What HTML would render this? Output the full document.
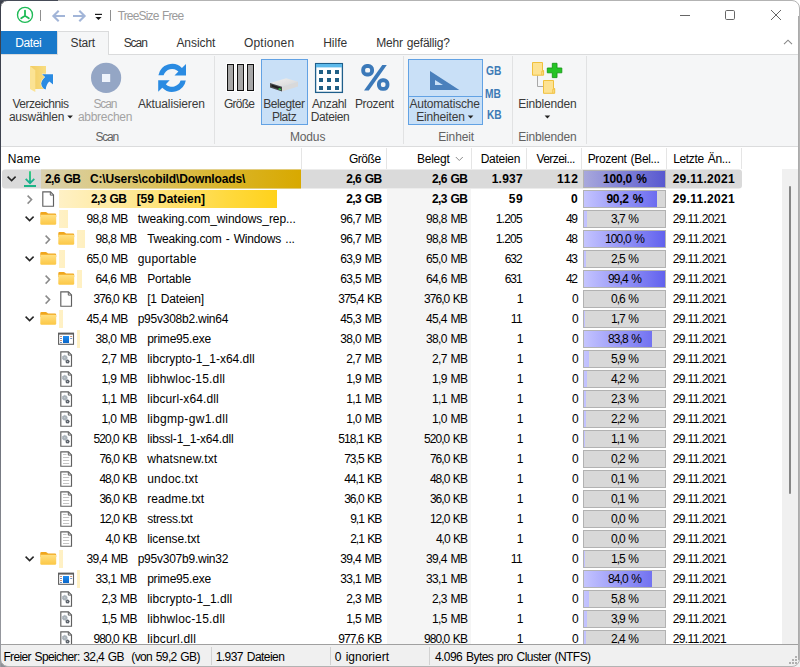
<!DOCTYPE html>
<html lang="de"><head><meta charset="utf-8"><title>TreeSize Free</title>
<style>
*{box-sizing:border-box;margin:0;padding:0}
html,body{width:800px;height:667px;overflow:hidden;background:#fff}
body{font-family:"Liberation Sans","DejaVu Sans",sans-serif;font-size:12px;color:#1a1a1a;position:relative}
.abs{position:absolute}
#win{position:absolute;left:0;top:0;width:800px;height:667px;overflow:hidden;background:#fff}
.t{position:absolute;white-space:pre;line-height:14px;height:14px}
/* tabs */
#tabline{position:absolute;left:0;top:54px;width:800px;height:1px;background:#dadbdc}
#datei{position:absolute;left:1px;top:31px;width:56px;height:23px;background:#1979ca}
#start{position:absolute;left:57px;top:31px;width:52px;height:24px;background:#f5f6f7;border:1px solid #dadbdc;border-bottom:none}
/* ribbon */
#ribbon{position:absolute;left:0;top:55px;width:800px;height:92px;background:#f5f6f7;border-bottom:1px solid #dbdcdd}
.sep{position:absolute;top:56px;width:1px;height:88px;background:#e1e2e3}
.btnsel{position:absolute;background:#c9e0f7;border:1px solid #62a2e4}
.unit{position:absolute;color:#3e7bb6;font-weight:bold;font-size:12px;line-height:12px;white-space:nowrap;transform:scaleX(0.85);transform-origin:0 0}
/* header */
#hdr{position:absolute;left:1px;top:147px;width:798px;height:22px;background:#fff}
.hs{position:absolute;top:148px;width:1px;height:21px;background:#e5e5e5}
/* rows */
#belcol{position:absolute;left:387px;top:189px;width:84px;height:456px;background:#f5f5f5}
.row{position:absolute;left:0;width:800px;height:20px}
.row.sel::before{content:"";position:absolute;left:2px;top:0;width:740px;height:19px;background:#dadada;border-radius:3px;transform:translateY(0.5px)}
.ic{position:absolute}
.gb{position:absolute;top:1px;height:18px;overflow:hidden}
.gb>div{height:18px;background:linear-gradient(90deg,#fff1c6 0%,#ffe894 30%,#ffd93d 70%,#ffce0a 100%)}
.gb.g0{top:0;height:19px;transform:translateY(0.5px);background:linear-gradient(90deg,#d9d0ad 0%,#dcc878 30%,#dab52a 70%,#d8a900 100%)}
.pb{position:absolute;left:583px;top:1px;width:83px;height:18px;border:1px solid #b2b2b2;background:#d8d8d8}
.pf{position:absolute;left:0;top:0;height:16px;overflow:hidden}
.pf>div{width:81px;height:16px;background:linear-gradient(90deg,#c4c4ff,#6262ee)}
.sel .pf>div{background:linear-gradient(90deg,#a8a8dc,#5858d0)}
/* scrollbar */
#sbar{position:absolute;left:782px;top:169px;width:17px;height:476px;background:#f0f0f0}
#thumb{position:absolute;left:789px;top:186px;width:2px;height:308px;background:#868686;border-radius:1px}
/* status */
#status{position:absolute;left:0;top:644px;width:800px;height:23px;background:#f0f0f0;border-top:1px solid #a0a0a0;z-index:5}
.ss{position:absolute;top:647px;width:1px;height:18px;background:#d2d2d2;z-index:6}
/* window frame */
#frame{position:absolute;left:0;top:0;width:800px;height:667px;border:1px solid #b3b3b3;border-radius:8px;pointer-events:none;z-index:50}
#frameL{position:absolute;left:0;top:0;width:1px;height:667px;background:linear-gradient(#3c404c 0%,#3f4450 30%,#5e626e 55%,#85888f 80%,#9a9ca2 100%);z-index:52}
#frameT{position:absolute;left:0;top:0;width:58px;height:1px;background:#464b57;z-index:52}
</style></head><body>
<div id="win">
<svg width="0" height="0" style="position:absolute"><defs>
<linearGradient id="fg" x1="0" y1="0" x2="0" y2="1"><stop offset="0" stop-color="#ffe082"/><stop offset="1" stop-color="#fcc744"/></linearGradient>
<linearGradient id="bg" x1="0" y1="0" x2="0" y2="1"><stop offset="0" stop-color="#1e8cf0"/><stop offset="1" stop-color="#0a66c8"/></linearGradient>
<linearGradient id="dg" x1="0" y1="2" x2="0" y2="15" gradientUnits="userSpaceOnUse"><stop offset="0" stop-color="#20cc74"/><stop offset="1" stop-color="#1aa892"/></linearGradient>
</defs></svg>
<!-- title bar -->
<svg class="abs" style="left:15px;top:5px" width="20" height="20" viewBox="15 5 20 20"><circle cx="25" cy="14.9" r="7.5" fill="none" stroke="#1dba55" stroke-width="1.35"/><path d="M25 10.6V15.8L21.2 18.2M25 15.8L28.8 18.2" fill="none" stroke="#1dba55" stroke-width="1.8" stroke-linecap="round"/></svg>
<div class="abs" style="left:40px;top:9.5px;width:1px;height:11px;background:#8f8f8f"></div>
<svg class="abs" style="left:50px;top:8px" width="18" height="16" viewBox="50 8 18 16"><path d="M65 16H53.8M58.7 10.8L53.4 16L58.7 21.2" fill="none" stroke="#a2b5d8" stroke-width="2.1"/></svg>
<svg class="abs" style="left:71px;top:8px" width="18" height="16" viewBox="71 8 18 16"><path d="M73 16H84.2M79.3 10.8L84.6 16L79.3 21.2" fill="none" stroke="#a2b5d8" stroke-width="2.1"/></svg>
<svg class="abs" style="left:93px;top:12px" width="12" height="10" viewBox="93 12 12 10"><path d="M95 14.4H102" stroke="#1a1a1a" stroke-width="1.2"/><path d="M95.4 16.9H101.6L98.5 20Z" fill="#1a1a1a"/></svg>
<div class="abs" style="left:110px;top:9.5px;width:1px;height:11px;background:#8f8f8f"></div>
<svg class="abs" style="left:679px;top:9px" width="12" height="12" viewBox="0 0 12 12"><path d="M1 6.5H11" stroke="#666" stroke-width="1"/></svg>
<svg class="abs" style="left:724px;top:9px" width="12" height="12" viewBox="0 0 12 12"><rect x="1.5" y="1.5" width="9" height="9" rx="1.2" fill="none" stroke="#666" stroke-width="1"/></svg>
<svg class="abs" style="left:770px;top:9px" width="12" height="12" viewBox="0 0 12 12"><path d="M1 1L11 11M11 1L1 11" stroke="#666" stroke-width="1"/></svg>
<svg class="abs" style="left:783px;top:39px" width="10" height="6" viewBox="0 0 10 6"><path d="M1 5.2L5 1.2L9 5.2" fill="none" stroke="#888" stroke-width="1.1"/></svg>
<!-- tabs -->
<div id="tabline"></div>
<div id="datei"></div>
<div id="start"></div>
<!-- ribbon -->
<div id="ribbon"></div>
<div class="sep" style="left:214px"></div>
<div class="sep" style="left:403px"></div>
<div class="sep" style="left:512px"></div>
<div class="sep" style="left:586px"></div>
<div class="btnsel" style="left:261px;top:59px;width:47px;height:66px"></div>
<div class="btnsel" style="left:408px;top:59px;width:75px;height:66px"></div>
<div class="abs" style="left:408px;top:96px;width:75px;height:1px;background:#62a2e4"></div>
<svg class="abs" style="left:0;top:55px" width="800" height="92" viewBox="0 55 800 92">
<defs>
<linearGradient id="f1" x1="0" y1="0" x2="1" y2="0"><stop offset="0" stop-color="#f2cc62"/><stop offset="1" stop-color="#f8dd82"/></linearGradient>
<linearGradient id="hd1" x1="0" y1="0" x2="1" y2="1"><stop offset="0" stop-color="#f0f0f0"/><stop offset="1" stop-color="#d6d6d6"/></linearGradient>
</defs>
<!-- open folder with arrow -->
<path d="M30 66 H46 V89 H35 Z" fill="url(#f1)"/>
<path d="M30 66 L35.3 70.2 V92 L30 89 Z" fill="#fbe394"/>
<path d="M42 74.2 H53 V84.6 L49.4 81.6 C47.2 83.6 46.2 86 45.7 89.6 C43 88.6 41.4 86.5 41.2 83.5 C41.6 80.7 43 78.7 45.1 76.9 Z" fill="#2a8be2" stroke="#fff" stroke-width="0.8" paint-order="stroke"/>
<!-- stop -->
<circle cx="106.1" cy="77.8" r="15.1" fill="#94a6c5"/>
<rect x="102" y="74" width="8.2" height="8" fill="#eef3fb"/>
<!-- refresh -->
<g fill="#2a8be2"><path id="ra" d="M158.4 75.3 A13.9 13.9 0 0 1 181.93 68.07 L186 64 L186 75.5 L174.5 75.5 L178.4 71.6 A8.9 8.9 0 0 0 163.6 75.3 Z"/><path d="M158.4 75.3 A13.9 13.9 0 0 1 181.93 68.07 L186 64 L186 75.5 L174.5 75.5 L178.4 71.6 A8.9 8.9 0 0 0 163.6 75.3 Z" transform="rotate(180 172.1 77.9)"/></g>
<!-- Groesse bars -->
<g fill="#a7a7a7" stroke="#111" stroke-width="1"><rect x="226" y="63" width="9" height="29" fill="#fff" stroke="none"/><rect x="236" y="63" width="9" height="29" fill="#fff" stroke="none"/><rect x="246" y="63" width="9" height="29" fill="#fff" stroke="none"/><rect x="227.5" y="64.5" width="6" height="26"/><rect x="237.5" y="64.5" width="6" height="26"/><rect x="247.5" y="64.5" width="6" height="26"/></g>
<!-- HDD -->
<path d="M270 82.9 L286.2 78.3 L298 81.8 L282 86.8 Z" fill="url(#hd1)"/>
<path d="M282 86.8 L298 81.8 V86.5 L282 91.5 Z" fill="#d9d9d9"/>
<path d="M270 82.9 L282 86.8 V91.5 L270 87.6 Z" fill="#4a4a4a"/>
<path d="M271.5 84.6 L281 87.8 V89.8 L271.5 86.6 Z" fill="#1e1e1e"/>
<path d="M278.6 88 L281 88.8 V90.2 L278.6 89.4 Z" fill="#35d04a"/>
<!-- Anzahl Dateien -->
<rect x="315.6" y="63.6" width="26.8" height="28.8" fill="#fff" stroke="#1f5f8b" stroke-width="1.3"/>
<rect x="316" y="64" width="26" height="3.4" fill="#5db9ea"/>
<g fill="#1f5f85"><rect x="319" y="70" width="4" height="4"/><rect x="327" y="70" width="4" height="4"/><rect x="335" y="70" width="4" height="4"/><rect x="319" y="78" width="4" height="4"/><rect x="327" y="78" width="4" height="4"/><rect x="335" y="78" width="4" height="4"/><rect x="319" y="86" width="4" height="4"/><rect x="327" y="86" width="4" height="4"/><rect x="335" y="86" width="4" height="4"/></g>
<!-- Percent -->
<g fill="none" stroke="#3b79b9" stroke-width="3.9"><rect x="363.2" y="65.95" width="8.85" height="8.6" rx="3.6"/><rect x="378.95" y="80.25" width="8.5" height="8.6" rx="3.6"/></g>
<path d="M382.3 64.9 H386.8 L368.8 90.6 H364 Z" fill="#3b79b9"/>
<!-- triangle -->
<path d="M430 71 V90 H459.3 Z M435 80 L443 84.9 H435 Z" fill="#4a80bc" fill-rule="evenodd"/>
<!-- Einblenden -->
<path d="M537.5 75.5 V86.5 H543" fill="none" stroke="#a8a8a8" stroke-width="1"/>
<path d="M532.5 62.5 H542.5 V70.5 H543.6 V75.2 H532.5 Z" fill="#fde292" stroke="#f0c03c" stroke-width="1"/>
<path d="M541.8 75 V71.2 H543.4" fill="none" stroke="#f0c03c" stroke-width="0.9"/>
<path d="M543.5 80.5 H553.5 V88.5 H554.7 V93.3 H543.5 Z" fill="#fde292" stroke="#f0c03c" stroke-width="1"/>
<path d="M552.8 93 V89.2 H554.4" fill="none" stroke="#f0c03c" stroke-width="0.9"/>
<path d="M552.3 63.3 H557 V68 H561.8 V72.8 H557 V77.6 H552.3 V72.8 H547.3 V68 H552.3 Z" fill="#25c425" stroke="#179a17" stroke-width="0.9"/>
<!-- dropdown arrows -->
<path d="M67.3 115.4 H72.9 L70.1 118.4 Z" fill="#222"/>
<path d="M467.8 115.4 H473.4 L470.6 118.4 Z" fill="#222"/>
<path d="M544.6 115.4 H550.2 L547.4 118.4 Z" fill="#222"/>
</svg>
<div class="unit" style="left:486.1px;top:65.3px">GB</div>
<div class="unit" style="left:485.2px;top:87.5px">MB</div>
<div class="unit" style="left:486.6px;top:109.4px">KB</div>
<!-- header -->
<div id="hdr"></div>
<div class="hs" style="left:301px"></div><div class="hs" style="left:386px"></div><div class="hs" style="left:471px"></div><div class="hs" style="left:526px"></div><div class="hs" style="left:581px"></div><div class="hs" style="left:666px"></div><div class="hs" style="left:741px"></div>
<svg class="abs" style="left:455px;top:156px" width="9" height="6" viewBox="0 0 9 6"><path d="M0.8 1L4.3 4.5L7.8 1" fill="none" stroke="#8a8a8a" stroke-width="1"/></svg>
<!-- rows -->
<div id="belcol"></div>
<div class="row sel" style="top:169px"><svg class="ic" style="left:5px;top:0" width="14" height="20" viewBox="0 0 14 20"><path d="M2.6 7.6 L6.6 11.6 L10.6 7.6" fill="none" stroke="#262626" stroke-width="1.5"/></svg><svg class="ic" style="left:22px;top:0" width="18" height="20" viewBox="0 0 18 20"><path d="M8 2.3 V14 M3.7 9.9 L8 14.2 L12.3 9.9" fill="none" stroke="url(#dg)" stroke-width="1.8"/><path d="M2 17 H14" stroke="#1db487" stroke-width="2"/></svg><div class="gb g0" style="left:41px;width:260px"></div><div class="pb"><div class="pf" style="width:81px"><div></div></div></div></div>
<div class="row" style="top:189px"><svg class="ic" style="left:23px;top:0" width="14" height="20" viewBox="0 0 14 20"><path d="M4.6 6.6 L8.6 10.6 L4.6 14.6" fill="none" stroke="#8a8a8a" stroke-width="1.5"/></svg><svg class="ic" style="left:40px;top:0" width="18" height="20" viewBox="0 0 18 20"><path d="M2.8 2.9 H10.5 L13.5 5.9 V17.2 H2.8 Z" fill="#fff" stroke="#606060" stroke-width="1.15" stroke-linejoin="miter"/><path d="M10.3 3.1 V6.1 H13.3" fill="none" stroke="#606060" stroke-width="1" stroke-linejoin="round"/></svg><div class="gb" style="left:59px;width:218px"><div style="width:242px"></div></div><div class="pb"><div class="pf" style="width:73px"><div></div></div></div></div>
<div class="row" style="top:209px"><svg class="ic" style="left:23px;top:0" width="14" height="20" viewBox="0 0 14 20"><path d="M2.6 7.6 L6.6 11.6 L10.6 7.6" fill="none" stroke="#262626" stroke-width="1.5"/></svg><svg class="ic" style="left:40px;top:0" width="18" height="20" viewBox="0 0 18 20"><path d="M0.3 4.2 Q0.3 3 1.5 3 H5.6 Q6.3 3 6.9 3.5 L8 4.6 H15 Q16.2 4.6 16.2 5.8 V8 H0.3 Z" fill="#f0a61c"/><path d="M0.3 6.7 Q0.3 5.7 1.3 5.7 H15.2 Q16.2 5.7 16.2 6.7 V14.6 Q16.2 15.8 15 15.8 H1.5 Q0.3 15.8 0.3 14.6 Z" fill="url(#fg)"/></svg><div class="gb" style="left:59px;width:9px"><div style="width:242px"></div></div><div class="pb"><div class="pf" style="width:3px"><div></div></div></div></div>
<div class="row" style="top:229px"><svg class="ic" style="left:41px;top:0" width="14" height="20" viewBox="0 0 14 20"><path d="M4.6 6.6 L8.6 10.6 L4.6 14.6" fill="none" stroke="#8a8a8a" stroke-width="1.5"/></svg><svg class="ic" style="left:58px;top:0" width="18" height="20" viewBox="0 0 18 20"><path d="M0.3 4.2 Q0.3 3 1.5 3 H5.6 Q6.3 3 6.9 3.5 L8 4.6 H15 Q16.2 4.6 16.2 5.8 V8 H0.3 Z" fill="#f0a61c"/><path d="M0.3 6.7 Q0.3 5.7 1.3 5.7 H15.2 Q16.2 5.7 16.2 6.7 V14.6 Q16.2 15.8 15 15.8 H1.5 Q0.3 15.8 0.3 14.6 Z" fill="url(#fg)"/></svg><div class="gb" style="left:77px;width:8px"><div style="width:224px"></div></div><div class="pb"><div class="pf" style="width:81px"><div></div></div></div></div>
<div class="row" style="top:249px"><svg class="ic" style="left:23px;top:0" width="14" height="20" viewBox="0 0 14 20"><path d="M2.6 7.6 L6.6 11.6 L10.6 7.6" fill="none" stroke="#262626" stroke-width="1.5"/></svg><svg class="ic" style="left:40px;top:0" width="18" height="20" viewBox="0 0 18 20"><path d="M0.3 4.2 Q0.3 3 1.5 3 H5.6 Q6.3 3 6.9 3.5 L8 4.6 H15 Q16.2 4.6 16.2 5.8 V8 H0.3 Z" fill="#f0a61c"/><path d="M0.3 6.7 Q0.3 5.7 1.3 5.7 H15.2 Q16.2 5.7 16.2 6.7 V14.6 Q16.2 15.8 15 15.8 H1.5 Q0.3 15.8 0.3 14.6 Z" fill="url(#fg)"/></svg><div class="gb" style="left:59px;width:6px"><div style="width:242px"></div></div><div class="pb"><div class="pf" style="width:2px"><div></div></div></div></div>
<div class="row" style="top:269px"><svg class="ic" style="left:41px;top:0" width="14" height="20" viewBox="0 0 14 20"><path d="M4.6 6.6 L8.6 10.6 L4.6 14.6" fill="none" stroke="#8a8a8a" stroke-width="1.5"/></svg><svg class="ic" style="left:58px;top:0" width="18" height="20" viewBox="0 0 18 20"><path d="M0.3 4.2 Q0.3 3 1.5 3 H5.6 Q6.3 3 6.9 3.5 L8 4.6 H15 Q16.2 4.6 16.2 5.8 V8 H0.3 Z" fill="#f0a61c"/><path d="M0.3 6.7 Q0.3 5.7 1.3 5.7 H15.2 Q16.2 5.7 16.2 6.7 V14.6 Q16.2 15.8 15 15.8 H1.5 Q0.3 15.8 0.3 14.6 Z" fill="url(#fg)"/></svg><div class="gb" style="left:77px;width:5px"><div style="width:224px"></div></div><div class="pb"><div class="pf" style="width:81px"><div></div></div></div></div>
<div class="row" style="top:289px"><svg class="ic" style="left:41px;top:0" width="14" height="20" viewBox="0 0 14 20"><path d="M4.6 6.6 L8.6 10.6 L4.6 14.6" fill="none" stroke="#8a8a8a" stroke-width="1.5"/></svg><svg class="ic" style="left:58px;top:0" width="18" height="20" viewBox="0 0 18 20"><path d="M2.8 2.9 H10.5 L13.5 5.9 V17.2 H2.8 Z" fill="#fff" stroke="#606060" stroke-width="1.15" stroke-linejoin="miter"/><path d="M10.3 3.1 V6.1 H13.3" fill="none" stroke="#606060" stroke-width="1" stroke-linejoin="round"/></svg><div class="pb"><div class="pf" style="width:0px"><div></div></div></div></div>
<div class="row" style="top:309px"><svg class="ic" style="left:23px;top:0" width="14" height="20" viewBox="0 0 14 20"><path d="M2.6 7.6 L6.6 11.6 L10.6 7.6" fill="none" stroke="#262626" stroke-width="1.5"/></svg><svg class="ic" style="left:40px;top:0" width="18" height="20" viewBox="0 0 18 20"><path d="M0.3 4.2 Q0.3 3 1.5 3 H5.6 Q6.3 3 6.9 3.5 L8 4.6 H15 Q16.2 4.6 16.2 5.8 V8 H0.3 Z" fill="#f0a61c"/><path d="M0.3 6.7 Q0.3 5.7 1.3 5.7 H15.2 Q16.2 5.7 16.2 6.7 V14.6 Q16.2 15.8 15 15.8 H1.5 Q0.3 15.8 0.3 14.6 Z" fill="url(#fg)"/></svg><div class="gb" style="left:59px;width:4px"><div style="width:242px"></div></div><div class="pb"><div class="pf" style="width:1px"><div></div></div></div></div>
<div class="row" style="top:329px"><svg class="ic" style="left:58px;top:0" width="18" height="20" viewBox="0 0 18 20"><rect x="0.6" y="4.3" width="14.9" height="11" fill="#fff" stroke="#5e5e5e" stroke-width="1.1"/><rect x="0.1" y="3.8" width="15.9" height="1.8" fill="#5e5e5e"/><rect x="5" y="7" width="6" height="7" fill="url(#bg)"/><path d="M2 7.5H4M2 11.5H4M12.2 7.5H14.2" stroke="#c9937c" stroke-width="1"/><path d="M2 9.5H4M2 13.5H4M12.2 9.5H14.2" stroke="#7090c0" stroke-width="1"/></svg><div class="gb" style="left:77px;width:3px"><div style="width:224px"></div></div><div class="pb"><div class="pf" style="width:68px"><div></div></div></div></div>
<div class="row" style="top:349px"><svg class="ic" style="left:58px;top:0" width="18" height="20" viewBox="0 0 18 20"><path d="M2.8 2.9 H10.5 L13.5 5.9 V17.2 H2.8 Z" fill="#fff" stroke="#606060" stroke-width="1.15" stroke-linejoin="miter"/><path d="M10.3 3.1 V6.1 H13.3" fill="none" stroke="#606060" stroke-width="1" stroke-linejoin="round"/><circle cx="6.75" cy="8.7" r="1.6" fill="#c9d3d0" stroke="#aab2ba" stroke-width="1.9"/><circle cx="6.75" cy="8.7" r="2.4" fill="none" stroke="#aab2ba" stroke-width="0.9" stroke-dasharray="0.9 0.98"/><circle cx="9.55" cy="12.5" r="1.15" fill="#fff" stroke="#5c636b" stroke-width="1.4"/><circle cx="9.55" cy="12.5" r="1.9" fill="none" stroke="#5c636b" stroke-width="0.7" stroke-dasharray="0.7 0.79"/></svg><div class="pb"><div class="pf" style="width:5px"><div></div></div></div></div>
<div class="row" style="top:369px"><svg class="ic" style="left:58px;top:0" width="18" height="20" viewBox="0 0 18 20"><path d="M2.8 2.9 H10.5 L13.5 5.9 V17.2 H2.8 Z" fill="#fff" stroke="#606060" stroke-width="1.15" stroke-linejoin="miter"/><path d="M10.3 3.1 V6.1 H13.3" fill="none" stroke="#606060" stroke-width="1" stroke-linejoin="round"/><circle cx="6.75" cy="8.7" r="1.6" fill="#c9d3d0" stroke="#aab2ba" stroke-width="1.9"/><circle cx="6.75" cy="8.7" r="2.4" fill="none" stroke="#aab2ba" stroke-width="0.9" stroke-dasharray="0.9 0.98"/><circle cx="9.55" cy="12.5" r="1.15" fill="#fff" stroke="#5c636b" stroke-width="1.4"/><circle cx="9.55" cy="12.5" r="1.9" fill="none" stroke="#5c636b" stroke-width="0.7" stroke-dasharray="0.7 0.79"/></svg><div class="pb"><div class="pf" style="width:3px"><div></div></div></div></div>
<div class="row" style="top:389px"><svg class="ic" style="left:58px;top:0" width="18" height="20" viewBox="0 0 18 20"><path d="M2.8 2.9 H10.5 L13.5 5.9 V17.2 H2.8 Z" fill="#fff" stroke="#606060" stroke-width="1.15" stroke-linejoin="miter"/><path d="M10.3 3.1 V6.1 H13.3" fill="none" stroke="#606060" stroke-width="1" stroke-linejoin="round"/><circle cx="6.75" cy="8.7" r="1.6" fill="#c9d3d0" stroke="#aab2ba" stroke-width="1.9"/><circle cx="6.75" cy="8.7" r="2.4" fill="none" stroke="#aab2ba" stroke-width="0.9" stroke-dasharray="0.9 0.98"/><circle cx="9.55" cy="12.5" r="1.15" fill="#fff" stroke="#5c636b" stroke-width="1.4"/><circle cx="9.55" cy="12.5" r="1.9" fill="none" stroke="#5c636b" stroke-width="0.7" stroke-dasharray="0.7 0.79"/></svg><div class="pb"><div class="pf" style="width:2px"><div></div></div></div></div>
<div class="row" style="top:409px"><svg class="ic" style="left:58px;top:0" width="18" height="20" viewBox="0 0 18 20"><path d="M2.8 2.9 H10.5 L13.5 5.9 V17.2 H2.8 Z" fill="#fff" stroke="#606060" stroke-width="1.15" stroke-linejoin="miter"/><path d="M10.3 3.1 V6.1 H13.3" fill="none" stroke="#606060" stroke-width="1" stroke-linejoin="round"/><circle cx="6.75" cy="8.7" r="1.6" fill="#c9d3d0" stroke="#aab2ba" stroke-width="1.9"/><circle cx="6.75" cy="8.7" r="2.4" fill="none" stroke="#aab2ba" stroke-width="0.9" stroke-dasharray="0.9 0.98"/><circle cx="9.55" cy="12.5" r="1.15" fill="#fff" stroke="#5c636b" stroke-width="1.4"/><circle cx="9.55" cy="12.5" r="1.9" fill="none" stroke="#5c636b" stroke-width="0.7" stroke-dasharray="0.7 0.79"/></svg><div class="pb"><div class="pf" style="width:2px"><div></div></div></div></div>
<div class="row" style="top:429px"><svg class="ic" style="left:58px;top:0" width="18" height="20" viewBox="0 0 18 20"><path d="M2.8 2.9 H10.5 L13.5 5.9 V17.2 H2.8 Z" fill="#fff" stroke="#606060" stroke-width="1.15" stroke-linejoin="miter"/><path d="M10.3 3.1 V6.1 H13.3" fill="none" stroke="#606060" stroke-width="1" stroke-linejoin="round"/><circle cx="6.75" cy="8.7" r="1.6" fill="#c9d3d0" stroke="#aab2ba" stroke-width="1.9"/><circle cx="6.75" cy="8.7" r="2.4" fill="none" stroke="#aab2ba" stroke-width="0.9" stroke-dasharray="0.9 0.98"/><circle cx="9.55" cy="12.5" r="1.15" fill="#fff" stroke="#5c636b" stroke-width="1.4"/><circle cx="9.55" cy="12.5" r="1.9" fill="none" stroke="#5c636b" stroke-width="0.7" stroke-dasharray="0.7 0.79"/></svg><div class="pb"><div class="pf" style="width:1px"><div></div></div></div></div>
<div class="row" style="top:449px"><svg class="ic" style="left:58px;top:0" width="18" height="20" viewBox="0 0 18 20"><path d="M2.8 2.9 H10.5 L13.5 5.9 V17.2 H2.8 Z" fill="#fff" stroke="#606060" stroke-width="1.15" stroke-linejoin="miter"/><path d="M10.3 3.1 V6.1 H13.3" fill="none" stroke="#606060" stroke-width="1" stroke-linejoin="round"/><path d="M5 8.5H9.5M5 8.5H11.2M5 11.5H11.2M5 14.5H11.2M5 5.5H8.5" stroke="#c4c4c4" stroke-width="1"/></svg><div class="pb"><div class="pf" style="width:0px"><div></div></div></div></div>
<div class="row" style="top:469px"><svg class="ic" style="left:58px;top:0" width="18" height="20" viewBox="0 0 18 20"><path d="M2.8 2.9 H10.5 L13.5 5.9 V17.2 H2.8 Z" fill="#fff" stroke="#606060" stroke-width="1.15" stroke-linejoin="miter"/><path d="M10.3 3.1 V6.1 H13.3" fill="none" stroke="#606060" stroke-width="1" stroke-linejoin="round"/><path d="M5 8.5H9.5M5 8.5H11.2M5 11.5H11.2M5 14.5H11.2M5 5.5H8.5" stroke="#c4c4c4" stroke-width="1"/></svg><div class="pb"><div class="pf" style="width:0px"><div></div></div></div></div>
<div class="row" style="top:489px"><svg class="ic" style="left:58px;top:0" width="18" height="20" viewBox="0 0 18 20"><path d="M2.8 2.9 H10.5 L13.5 5.9 V17.2 H2.8 Z" fill="#fff" stroke="#606060" stroke-width="1.15" stroke-linejoin="miter"/><path d="M10.3 3.1 V6.1 H13.3" fill="none" stroke="#606060" stroke-width="1" stroke-linejoin="round"/><path d="M5 8.5H9.5M5 8.5H11.2M5 11.5H11.2M5 14.5H11.2M5 5.5H8.5" stroke="#c4c4c4" stroke-width="1"/></svg><div class="pb"><div class="pf" style="width:0px"><div></div></div></div></div>
<div class="row" style="top:509px"><svg class="ic" style="left:58px;top:0" width="18" height="20" viewBox="0 0 18 20"><path d="M2.8 2.9 H10.5 L13.5 5.9 V17.2 H2.8 Z" fill="#fff" stroke="#606060" stroke-width="1.15" stroke-linejoin="miter"/><path d="M10.3 3.1 V6.1 H13.3" fill="none" stroke="#606060" stroke-width="1" stroke-linejoin="round"/><path d="M5 8.5H9.5M5 8.5H11.2M5 11.5H11.2M5 14.5H11.2M5 5.5H8.5" stroke="#c4c4c4" stroke-width="1"/></svg><div class="pb"><div class="pf" style="width:0px"><div></div></div></div></div>
<div class="row" style="top:529px"><svg class="ic" style="left:58px;top:0" width="18" height="20" viewBox="0 0 18 20"><path d="M2.8 2.9 H10.5 L13.5 5.9 V17.2 H2.8 Z" fill="#fff" stroke="#606060" stroke-width="1.15" stroke-linejoin="miter"/><path d="M10.3 3.1 V6.1 H13.3" fill="none" stroke="#606060" stroke-width="1" stroke-linejoin="round"/><path d="M5 8.5H9.5M5 8.5H11.2M5 11.5H11.2M5 14.5H11.2M5 5.5H8.5" stroke="#c4c4c4" stroke-width="1"/></svg><div class="pb"><div class="pf" style="width:0px"><div></div></div></div></div>
<div class="row" style="top:549px"><svg class="ic" style="left:23px;top:0" width="14" height="20" viewBox="0 0 14 20"><path d="M2.6 7.6 L6.6 11.6 L10.6 7.6" fill="none" stroke="#262626" stroke-width="1.5"/></svg><svg class="ic" style="left:40px;top:0" width="18" height="20" viewBox="0 0 18 20"><path d="M0.3 4.2 Q0.3 3 1.5 3 H5.6 Q6.3 3 6.9 3.5 L8 4.6 H15 Q16.2 4.6 16.2 5.8 V8 H0.3 Z" fill="#f0a61c"/><path d="M0.3 6.7 Q0.3 5.7 1.3 5.7 H15.2 Q16.2 5.7 16.2 6.7 V14.6 Q16.2 15.8 15 15.8 H1.5 Q0.3 15.8 0.3 14.6 Z" fill="url(#fg)"/></svg><div class="gb" style="left:59px;width:4px"><div style="width:242px"></div></div><div class="pb"><div class="pf" style="width:1px"><div></div></div></div></div>
<div class="row" style="top:569px"><svg class="ic" style="left:58px;top:0" width="18" height="20" viewBox="0 0 18 20"><rect x="0.6" y="4.3" width="14.9" height="11" fill="#fff" stroke="#5e5e5e" stroke-width="1.1"/><rect x="0.1" y="3.8" width="15.9" height="1.8" fill="#5e5e5e"/><rect x="5" y="7" width="6" height="7" fill="url(#bg)"/><path d="M2 7.5H4M2 11.5H4M12.2 7.5H14.2" stroke="#c9937c" stroke-width="1"/><path d="M2 9.5H4M2 13.5H4M12.2 9.5H14.2" stroke="#7090c0" stroke-width="1"/></svg><div class="gb" style="left:77px;width:3px"><div style="width:224px"></div></div><div class="pb"><div class="pf" style="width:68px"><div></div></div></div></div>
<div class="row" style="top:589px"><svg class="ic" style="left:58px;top:0" width="18" height="20" viewBox="0 0 18 20"><path d="M2.8 2.9 H10.5 L13.5 5.9 V17.2 H2.8 Z" fill="#fff" stroke="#606060" stroke-width="1.15" stroke-linejoin="miter"/><path d="M10.3 3.1 V6.1 H13.3" fill="none" stroke="#606060" stroke-width="1" stroke-linejoin="round"/><circle cx="6.75" cy="8.7" r="1.6" fill="#c9d3d0" stroke="#aab2ba" stroke-width="1.9"/><circle cx="6.75" cy="8.7" r="2.4" fill="none" stroke="#aab2ba" stroke-width="0.9" stroke-dasharray="0.9 0.98"/><circle cx="9.55" cy="12.5" r="1.15" fill="#fff" stroke="#5c636b" stroke-width="1.4"/><circle cx="9.55" cy="12.5" r="1.9" fill="none" stroke="#5c636b" stroke-width="0.7" stroke-dasharray="0.7 0.79"/></svg><div class="pb"><div class="pf" style="width:5px"><div></div></div></div></div>
<div class="row" style="top:609px"><svg class="ic" style="left:58px;top:0" width="18" height="20" viewBox="0 0 18 20"><path d="M2.8 2.9 H10.5 L13.5 5.9 V17.2 H2.8 Z" fill="#fff" stroke="#606060" stroke-width="1.15" stroke-linejoin="miter"/><path d="M10.3 3.1 V6.1 H13.3" fill="none" stroke="#606060" stroke-width="1" stroke-linejoin="round"/><circle cx="6.75" cy="8.7" r="1.6" fill="#c9d3d0" stroke="#aab2ba" stroke-width="1.9"/><circle cx="6.75" cy="8.7" r="2.4" fill="none" stroke="#aab2ba" stroke-width="0.9" stroke-dasharray="0.9 0.98"/><circle cx="9.55" cy="12.5" r="1.15" fill="#fff" stroke="#5c636b" stroke-width="1.4"/><circle cx="9.55" cy="12.5" r="1.9" fill="none" stroke="#5c636b" stroke-width="0.7" stroke-dasharray="0.7 0.79"/></svg><div class="pb"><div class="pf" style="width:3px"><div></div></div></div></div>
<div class="row" style="top:629px"><svg class="ic" style="left:58px;top:0" width="18" height="20" viewBox="0 0 18 20"><path d="M2.8 2.9 H10.5 L13.5 5.9 V17.2 H2.8 Z" fill="#fff" stroke="#606060" stroke-width="1.15" stroke-linejoin="miter"/><path d="M10.3 3.1 V6.1 H13.3" fill="none" stroke="#606060" stroke-width="1" stroke-linejoin="round"/><circle cx="6.75" cy="8.7" r="1.6" fill="#c9d3d0" stroke="#aab2ba" stroke-width="1.9"/><circle cx="6.75" cy="8.7" r="2.4" fill="none" stroke="#aab2ba" stroke-width="0.9" stroke-dasharray="0.9 0.98"/><circle cx="9.55" cy="12.5" r="1.15" fill="#fff" stroke="#5c636b" stroke-width="1.4"/><circle cx="9.55" cy="12.5" r="1.9" fill="none" stroke="#5c636b" stroke-width="0.7" stroke-dasharray="0.7 0.79"/></svg><div class="pb"><div class="pf" style="width:2px"><div></div></div></div></div>
<div id="sbar"></div><div id="thumb"></div>
<!-- status -->
<div id="status"></div>
<div class="ss" style="left:211px"></div>
<div class="ss" style="left:330px"></div>
<div class="ss" style="left:429px"></div>
<svg class="abs" style="left:786px;top:654px;z-index:7" width="12" height="12" viewBox="786 654 12 12"><g fill="#b0b0b0"><rect x="795" y="656" width="2" height="2"/><rect x="792" y="659" width="2" height="2"/><rect x="795" y="659" width="2" height="2"/><rect x="789" y="662" width="2" height="2"/><rect x="792" y="662" width="2" height="2"/><rect x="795" y="662" width="2" height="2"/></g></svg>
<span class="t" style="left:117.65px;top:9px;letter-spacing:-0.841px;color:#9b9b9b;word-spacing:1.0px;">TreeSize Free</span>
<span class="t" style="left:15.15px;top:36px;letter-spacing:-0.391px;color:#fff;">Datei</span>
<span class="t" style="left:70.60px;top:36px;letter-spacing:-0.198px;color:#333;">Start</span>
<span class="t" style="left:123.65px;top:36px;letter-spacing:-1.036px;color:#333;">Scan</span>
<span class="t" style="left:176.40px;top:36px;letter-spacing:-0.060px;color:#333;">Ansicht</span>
<span class="t" style="left:243.90px;top:36px;letter-spacing:0.221px;color:#333;">Optionen</span>
<span class="t" style="left:323.15px;top:36px;letter-spacing:-0.004px;color:#333;">Hilfe</span>
<span class="t" style="left:376.15px;top:36px;letter-spacing:-0.202px;color:#333;word-spacing:1.0px;">Mehr gefällig?</span>
<span class="t" style="left:12.40px;top:97px;letter-spacing:-0.487px;color:#3a3a3a;">Verzeichnis</span>
<span class="t" style="left:8.90px;top:110px;letter-spacing:-0.234px;color:#3a3a3a;">auswählen</span>
<span class="t" style="left:93.40px;top:97px;letter-spacing:-1.120px;color:#a3a3a3;">Scan</span>
<span class="t" style="left:77.90px;top:110px;letter-spacing:-0.277px;color:#a3a3a3;">abbrechen</span>
<span class="t" style="left:137.90px;top:97px;letter-spacing:-0.142px;color:#3a3a3a;">Aktualisieren</span>
<span class="t" style="left:95.40px;top:130px;letter-spacing:-1.200px;color:#626262;">Scan</span>
<span class="t" style="left:223.90px;top:97px;letter-spacing:-0.754px;color:#3a3a3a;">Größe</span>
<span class="t" style="left:263.15px;top:97px;letter-spacing:-0.422px;color:#3a3a3a;">Belegter</span>
<span class="t" style="left:271.90px;top:110px;letter-spacing:-0.484px;color:#3a3a3a;">Platz</span>
<span class="t" style="left:311.90px;top:97px;letter-spacing:-0.391px;color:#3a3a3a;">Anzahl</span>
<span class="t" style="left:310.65px;top:110px;letter-spacing:-0.396px;color:#3a3a3a;">Dateien</span>
<span class="t" style="left:354.90px;top:97px;letter-spacing:-0.352px;color:#3a3a3a;">Prozent</span>
<span class="t" style="left:289.90px;top:130px;letter-spacing:-0.133px;color:#626262;">Modus</span>
<span class="t" style="left:409.40px;top:97px;letter-spacing:-0.200px;color:#3a3a3a;">Automatische</span>
<span class="t" style="left:416.15px;top:110px;letter-spacing:-0.162px;color:#3a3a3a;">Einheiten</span>
<span class="t" style="left:518.15px;top:97px;letter-spacing:-0.174px;color:#3a3a3a;">Einblenden</span>
<span class="t" style="left:438.15px;top:130px;letter-spacing:-0.117px;color:#626262;">Einheit</span>
<span class="t" style="left:518.15px;top:130px;letter-spacing:-0.174px;color:#626262;">Einblenden</span>
<span class="t" style="left:7.65px;top:152px;letter-spacing:0.245px;color:#000;">Name</span>
<span class="t" style="left:348.90px;top:152px;letter-spacing:-0.441px;color:#000;">Größe</span>
<span class="t" style="left:416.90px;top:152px;letter-spacing:-0.206px;color:#000;">Belegt</span>
<span class="t" style="left:480.65px;top:152px;letter-spacing:-0.271px;color:#000;">Dateien</span>
<span class="t" style="left:536.40px;top:152px;letter-spacing:-0.545px;color:#000;">Verzei...</span>
<span class="t" style="left:587.65px;top:152px;letter-spacing:-0.342px;color:#000;word-spacing:1.0px;">Prozent (Bel...</span>
<span class="t" style="left:673.15px;top:152px;letter-spacing:-0.337px;color:#000;word-spacing:1.0px;">Letzte Än...</span>
<span class="t" style="left:3.40px;top:650px;letter-spacing:-0.634px;color:#000;word-spacing:1.0px;z-index:6;">Freier Speicher: 32,4 GB &nbsp;(von 59,2 GB)</span>
<span class="t" style="left:215.65px;top:650px;letter-spacing:-0.540px;color:#000;word-spacing:1.0px;z-index:6;">1.937 Dateien</span>
<span class="t" style="left:334.65px;top:650px;letter-spacing:-0.002px;color:#000;word-spacing:1.0px;z-index:6;">0 ignoriert</span>
<span class="t" style="left:434.90px;top:650px;letter-spacing:-0.547px;color:#000;word-spacing:1.0px;z-index:6;">4.096 Bytes pro Cluster (NTFS)</span>
<span class="t" style="left:44.90px;top:172px;letter-spacing:-0.603px;color:#000;word-spacing:1.0px;font-weight:bold;">2,6 GB</span>
<span class="t" style="left:89.90px;top:172px;letter-spacing:-0.128px;color:#000;font-weight:bold;">C:\Users\cobild\Downloads\</span>
<span class="t" style="left:346.15px;top:172px;letter-spacing:-0.603px;color:#000;word-spacing:1.0px;font-weight:bold;">2,6 GB</span>
<span class="t" style="left:431.90px;top:172px;letter-spacing:-0.603px;color:#000;word-spacing:1.0px;font-weight:bold;">2,6 GB</span>
<span class="t" style="left:491.65px;top:172px;letter-spacing:0.242px;color:#000;font-weight:bold;">1.937</span>
<span class="t" style="left:556.90px;top:172px;letter-spacing:0.820px;color:#000;font-weight:bold;">112</span>
<span class="t" style="left:602.90px;top:172px;letter-spacing:-0.174px;color:#000;word-spacing:1.0px;font-weight:bold;">100,0 %</span>
<span class="t" style="left:672.65px;top:172px;letter-spacing:0.288px;color:#000;font-weight:bold;">29.11.2021</span>
<span class="t" style="left:90.90px;top:192px;letter-spacing:-0.603px;color:#000;word-spacing:1.0px;font-weight:bold;">2,3 GB</span>
<span class="t" style="left:136.65px;top:192px;letter-spacing:-0.071px;color:#000;word-spacing:1.0px;font-weight:bold;">[59 Dateien]</span>
<span class="t" style="left:346.15px;top:192px;letter-spacing:-0.603px;color:#000;word-spacing:1.0px;font-weight:bold;">2,3 GB</span>
<span class="t" style="left:431.90px;top:192px;letter-spacing:-0.603px;color:#000;word-spacing:1.0px;font-weight:bold;">2,3 GB</span>
<span class="t" style="left:508.65px;top:192px;letter-spacing:0.641px;color:#000;font-weight:bold;">59</span>
<span class="t" style="left:570.90px;top:192px;letter-spacing:0.000px;color:#000;font-weight:bold;">0</span>
<span class="t" style="left:606.40px;top:192px;letter-spacing:-0.272px;color:#000;word-spacing:1.0px;font-weight:bold;">90,2 %</span>
<span class="t" style="left:672.65px;top:192px;letter-spacing:0.288px;color:#000;font-weight:bold;">29.11.2021</span>
<span class="t" style="left:86.40px;top:212px;letter-spacing:-0.617px;color:#000;word-spacing:1.0px;">98,8 MB</span>
<span class="t" style="left:137.65px;top:212px;letter-spacing:-0.070px;color:#000;">tweaking.com_windows_rep...</span>
<span class="t" style="left:340.15px;top:212px;letter-spacing:-0.617px;color:#000;word-spacing:1.0px;">96,7 MB</span>
<span class="t" style="left:425.90px;top:212px;letter-spacing:-0.617px;color:#000;word-spacing:1.0px;">98,8 MB</span>
<span class="t" style="left:495.65px;top:212px;letter-spacing:-0.758px;color:#000;">1.205</span>
<span class="t" style="left:565.90px;top:212px;letter-spacing:-1.200px;color:#000;">49</span>
<span class="t" style="left:610.90px;top:212px;letter-spacing:-0.922px;color:#000;word-spacing:1.0px;">3,7 %</span>
<span class="t" style="left:672.65px;top:212px;letter-spacing:-0.575px;color:#000;">29.11.2021</span>
<span class="t" style="left:95.40px;top:232px;letter-spacing:-0.617px;color:#000;word-spacing:1.0px;">98,8 MB</span>
<span class="t" style="left:147.15px;top:232px;letter-spacing:-0.186px;color:#000;word-spacing:1.0px;">Tweaking.com - Windows ...</span>
<span class="t" style="left:340.15px;top:232px;letter-spacing:-0.617px;color:#000;word-spacing:1.0px;">96,7 MB</span>
<span class="t" style="left:425.90px;top:232px;letter-spacing:-0.617px;color:#000;word-spacing:1.0px;">98,8 MB</span>
<span class="t" style="left:495.65px;top:232px;letter-spacing:-0.758px;color:#000;">1.205</span>
<span class="t" style="left:565.90px;top:232px;letter-spacing:-1.200px;color:#000;">48</span>
<span class="t" style="left:604.90px;top:232px;letter-spacing:-0.841px;color:#000;word-spacing:1.0px;">100,0 %</span>
<span class="t" style="left:672.65px;top:232px;letter-spacing:-0.575px;color:#000;">29.11.2021</span>
<span class="t" style="left:86.40px;top:252px;letter-spacing:-0.617px;color:#000;word-spacing:1.0px;">65,0 MB</span>
<span class="t" style="left:137.65px;top:252px;letter-spacing:0.226px;color:#000;">guportable</span>
<span class="t" style="left:340.15px;top:252px;letter-spacing:-0.617px;color:#000;word-spacing:1.0px;">63,9 MB</span>
<span class="t" style="left:425.90px;top:252px;letter-spacing:-0.617px;color:#000;word-spacing:1.0px;">65,0 MB</span>
<span class="t" style="left:504.65px;top:252px;letter-spacing:-1.016px;color:#000;">632</span>
<span class="t" style="left:565.90px;top:252px;letter-spacing:-1.200px;color:#000;">43</span>
<span class="t" style="left:610.90px;top:252px;letter-spacing:-0.922px;color:#000;word-spacing:1.0px;">2,5 %</span>
<span class="t" style="left:672.65px;top:252px;letter-spacing:-0.575px;color:#000;">29.11.2021</span>
<span class="t" style="left:95.40px;top:272px;letter-spacing:-0.617px;color:#000;word-spacing:1.0px;">64,6 MB</span>
<span class="t" style="left:147.15px;top:272px;letter-spacing:-0.100px;color:#000;">Portable</span>
<span class="t" style="left:340.15px;top:272px;letter-spacing:-0.617px;color:#000;word-spacing:1.0px;">63,5 MB</span>
<span class="t" style="left:425.90px;top:272px;letter-spacing:-0.617px;color:#000;word-spacing:1.0px;">64,6 MB</span>
<span class="t" style="left:504.65px;top:272px;letter-spacing:-1.016px;color:#000;">631</span>
<span class="t" style="left:565.90px;top:272px;letter-spacing:-1.200px;color:#000;">42</span>
<span class="t" style="left:607.90px;top:272px;letter-spacing:-0.872px;color:#000;word-spacing:1.0px;">99,4 %</span>
<span class="t" style="left:672.65px;top:272px;letter-spacing:-0.575px;color:#000;">29.11.2021</span>
<span class="t" style="left:93.40px;top:292px;letter-spacing:-0.911px;color:#000;word-spacing:1.0px;">376,0 KB</span>
<span class="t" style="left:147.15px;top:292px;letter-spacing:-0.205px;color:#000;word-spacing:1.0px;">[1 Dateien]</span>
<span class="t" style="left:338.15px;top:292px;letter-spacing:-0.911px;color:#000;word-spacing:1.0px;">375,4 KB</span>
<span class="t" style="left:423.90px;top:292px;letter-spacing:-0.911px;color:#000;word-spacing:1.0px;">376,0 KB</span>
<span class="t" style="left:516.65px;top:292px;letter-spacing:0.000px;color:#000;">1</span>
<span class="t" style="left:571.90px;top:292px;letter-spacing:0.000px;color:#000;">0</span>
<span class="t" style="left:610.90px;top:292px;letter-spacing:-0.922px;color:#000;word-spacing:1.0px;">0,6 %</span>
<span class="t" style="left:672.65px;top:292px;letter-spacing:-0.575px;color:#000;">29.11.2021</span>
<span class="t" style="left:86.40px;top:312px;letter-spacing:-0.617px;color:#000;word-spacing:1.0px;">45,4 MB</span>
<span class="t" style="left:137.65px;top:312px;letter-spacing:-0.238px;color:#000;">p95v308b2.win64</span>
<span class="t" style="left:340.15px;top:312px;letter-spacing:-0.617px;color:#000;word-spacing:1.0px;">45,3 MB</span>
<span class="t" style="left:425.90px;top:312px;letter-spacing:-0.617px;color:#000;word-spacing:1.0px;">45,4 MB</span>
<span class="t" style="left:510.65px;top:312px;letter-spacing:-0.469px;color:#000;">11</span>
<span class="t" style="left:571.90px;top:312px;letter-spacing:0.000px;color:#000;">0</span>
<span class="t" style="left:610.90px;top:312px;letter-spacing:-0.922px;color:#000;word-spacing:1.0px;">1,7 %</span>
<span class="t" style="left:672.65px;top:312px;letter-spacing:-0.575px;color:#000;">29.11.2021</span>
<span class="t" style="left:95.40px;top:332px;letter-spacing:-0.617px;color:#000;word-spacing:1.0px;">38,0 MB</span>
<span class="t" style="left:147.15px;top:332px;letter-spacing:-0.205px;color:#000;">prime95.exe</span>
<span class="t" style="left:340.15px;top:332px;letter-spacing:-0.617px;color:#000;word-spacing:1.0px;">38,0 MB</span>
<span class="t" style="left:425.90px;top:332px;letter-spacing:-0.617px;color:#000;word-spacing:1.0px;">38,0 MB</span>
<span class="t" style="left:516.65px;top:332px;letter-spacing:0.000px;color:#000;">1</span>
<span class="t" style="left:571.90px;top:332px;letter-spacing:0.000px;color:#000;">0</span>
<span class="t" style="left:607.90px;top:332px;letter-spacing:-0.872px;color:#000;word-spacing:1.0px;">83,8 %</span>
<span class="t" style="left:672.65px;top:332px;letter-spacing:-0.575px;color:#000;">29.11.2021</span>
<span class="t" style="left:101.40px;top:352px;letter-spacing:-0.603px;color:#000;word-spacing:1.0px;">2,7 MB</span>
<span class="t" style="left:147.15px;top:352px;letter-spacing:0.005px;color:#000;">libcrypto-1_1-x64.dll</span>
<span class="t" style="left:346.15px;top:352px;letter-spacing:-0.603px;color:#000;word-spacing:1.0px;">2,7 MB</span>
<span class="t" style="left:431.90px;top:352px;letter-spacing:-0.603px;color:#000;word-spacing:1.0px;">2,7 MB</span>
<span class="t" style="left:516.65px;top:352px;letter-spacing:0.000px;color:#000;">1</span>
<span class="t" style="left:571.90px;top:352px;letter-spacing:0.000px;color:#000;">0</span>
<span class="t" style="left:610.90px;top:352px;letter-spacing:-0.922px;color:#000;word-spacing:1.0px;">5,9 %</span>
<span class="t" style="left:672.65px;top:352px;letter-spacing:-0.575px;color:#000;">29.11.2021</span>
<span class="t" style="left:101.40px;top:372px;letter-spacing:-0.603px;color:#000;word-spacing:1.0px;">1,9 MB</span>
<span class="t" style="left:147.15px;top:372px;letter-spacing:0.170px;color:#000;">libhwloc-15.dll</span>
<span class="t" style="left:346.15px;top:372px;letter-spacing:-0.603px;color:#000;word-spacing:1.0px;">1,9 MB</span>
<span class="t" style="left:431.90px;top:372px;letter-spacing:-0.603px;color:#000;word-spacing:1.0px;">1,9 MB</span>
<span class="t" style="left:516.65px;top:372px;letter-spacing:0.000px;color:#000;">1</span>
<span class="t" style="left:571.90px;top:372px;letter-spacing:0.000px;color:#000;">0</span>
<span class="t" style="left:610.90px;top:372px;letter-spacing:-0.922px;color:#000;word-spacing:1.0px;">4,2 %</span>
<span class="t" style="left:672.65px;top:372px;letter-spacing:-0.575px;color:#000;">29.11.2021</span>
<span class="t" style="left:101.40px;top:392px;letter-spacing:-0.603px;color:#000;word-spacing:1.0px;">1,1 MB</span>
<span class="t" style="left:147.15px;top:392px;letter-spacing:0.105px;color:#000;">libcurl-x64.dll</span>
<span class="t" style="left:346.15px;top:392px;letter-spacing:-0.603px;color:#000;word-spacing:1.0px;">1,1 MB</span>
<span class="t" style="left:431.90px;top:392px;letter-spacing:-0.603px;color:#000;word-spacing:1.0px;">1,1 MB</span>
<span class="t" style="left:516.65px;top:392px;letter-spacing:0.000px;color:#000;">1</span>
<span class="t" style="left:571.90px;top:392px;letter-spacing:0.000px;color:#000;">0</span>
<span class="t" style="left:610.90px;top:392px;letter-spacing:-0.922px;color:#000;word-spacing:1.0px;">2,3 %</span>
<span class="t" style="left:672.65px;top:392px;letter-spacing:-0.575px;color:#000;">29.11.2021</span>
<span class="t" style="left:101.40px;top:412px;letter-spacing:-0.603px;color:#000;word-spacing:1.0px;">1,0 MB</span>
<span class="t" style="left:147.15px;top:412px;letter-spacing:0.311px;color:#000;">libgmp-gw1.dll</span>
<span class="t" style="left:346.15px;top:412px;letter-spacing:-0.603px;color:#000;word-spacing:1.0px;">1,0 MB</span>
<span class="t" style="left:431.90px;top:412px;letter-spacing:-0.603px;color:#000;word-spacing:1.0px;">1,0 MB</span>
<span class="t" style="left:516.65px;top:412px;letter-spacing:0.000px;color:#000;">1</span>
<span class="t" style="left:571.90px;top:412px;letter-spacing:0.000px;color:#000;">0</span>
<span class="t" style="left:610.90px;top:412px;letter-spacing:-0.922px;color:#000;word-spacing:1.0px;">2,2 %</span>
<span class="t" style="left:672.65px;top:412px;letter-spacing:-0.575px;color:#000;">29.11.2021</span>
<span class="t" style="left:93.40px;top:432px;letter-spacing:-0.911px;color:#000;word-spacing:1.0px;">520,0 KB</span>
<span class="t" style="left:147.15px;top:432px;letter-spacing:-0.169px;color:#000;">libssl-1_1-x64.dll</span>
<span class="t" style="left:338.15px;top:432px;letter-spacing:-0.911px;color:#000;word-spacing:1.0px;">518,1 KB</span>
<span class="t" style="left:423.90px;top:432px;letter-spacing:-0.911px;color:#000;word-spacing:1.0px;">520,0 KB</span>
<span class="t" style="left:516.65px;top:432px;letter-spacing:0.000px;color:#000;">1</span>
<span class="t" style="left:571.90px;top:432px;letter-spacing:0.000px;color:#000;">0</span>
<span class="t" style="left:610.90px;top:432px;letter-spacing:-0.922px;color:#000;word-spacing:1.0px;">1,1 %</span>
<span class="t" style="left:672.65px;top:432px;letter-spacing:-0.575px;color:#000;">29.11.2021</span>
<span class="t" style="left:99.40px;top:452px;letter-spacing:-0.951px;color:#000;word-spacing:1.0px;">76,0 KB</span>
<span class="t" style="left:147.15px;top:452px;letter-spacing:0.118px;color:#000;">whatsnew.txt</span>
<span class="t" style="left:344.15px;top:452px;letter-spacing:-0.951px;color:#000;word-spacing:1.0px;">73,5 KB</span>
<span class="t" style="left:429.90px;top:452px;letter-spacing:-0.951px;color:#000;word-spacing:1.0px;">76,0 KB</span>
<span class="t" style="left:516.65px;top:452px;letter-spacing:0.000px;color:#000;">1</span>
<span class="t" style="left:571.90px;top:452px;letter-spacing:0.000px;color:#000;">0</span>
<span class="t" style="left:610.90px;top:452px;letter-spacing:-0.922px;color:#000;word-spacing:1.0px;">0,2 %</span>
<span class="t" style="left:672.65px;top:452px;letter-spacing:-0.575px;color:#000;">29.11.2021</span>
<span class="t" style="left:99.40px;top:472px;letter-spacing:-0.951px;color:#000;word-spacing:1.0px;">48,0 KB</span>
<span class="t" style="left:147.15px;top:472px;letter-spacing:0.256px;color:#000;">undoc.txt</span>
<span class="t" style="left:344.15px;top:472px;letter-spacing:-0.951px;color:#000;word-spacing:1.0px;">44,1 KB</span>
<span class="t" style="left:429.90px;top:472px;letter-spacing:-0.951px;color:#000;word-spacing:1.0px;">48,0 KB</span>
<span class="t" style="left:516.65px;top:472px;letter-spacing:0.000px;color:#000;">1</span>
<span class="t" style="left:571.90px;top:472px;letter-spacing:0.000px;color:#000;">0</span>
<span class="t" style="left:610.90px;top:472px;letter-spacing:-0.922px;color:#000;word-spacing:1.0px;">0,1 %</span>
<span class="t" style="left:672.65px;top:472px;letter-spacing:-0.575px;color:#000;">29.11.2021</span>
<span class="t" style="left:99.40px;top:492px;letter-spacing:-0.951px;color:#000;word-spacing:1.0px;">36,0 KB</span>
<span class="t" style="left:147.15px;top:492px;letter-spacing:0.033px;color:#000;">readme.txt</span>
<span class="t" style="left:344.15px;top:492px;letter-spacing:-0.951px;color:#000;word-spacing:1.0px;">36,0 KB</span>
<span class="t" style="left:429.90px;top:492px;letter-spacing:-0.951px;color:#000;word-spacing:1.0px;">36,0 KB</span>
<span class="t" style="left:516.65px;top:492px;letter-spacing:0.000px;color:#000;">1</span>
<span class="t" style="left:571.90px;top:492px;letter-spacing:0.000px;color:#000;">0</span>
<span class="t" style="left:610.90px;top:492px;letter-spacing:-0.922px;color:#000;word-spacing:1.0px;">0,1 %</span>
<span class="t" style="left:672.65px;top:492px;letter-spacing:-0.575px;color:#000;">29.11.2021</span>
<span class="t" style="left:99.40px;top:512px;letter-spacing:-0.951px;color:#000;word-spacing:1.0px;">12,0 KB</span>
<span class="t" style="left:147.15px;top:512px;letter-spacing:-0.252px;color:#000;">stress.txt</span>
<span class="t" style="left:350.15px;top:512px;letter-spacing:-1.006px;color:#000;word-spacing:1.0px;">9,1 KB</span>
<span class="t" style="left:429.90px;top:512px;letter-spacing:-0.951px;color:#000;word-spacing:1.0px;">12,0 KB</span>
<span class="t" style="left:516.65px;top:512px;letter-spacing:0.000px;color:#000;">1</span>
<span class="t" style="left:571.90px;top:512px;letter-spacing:0.000px;color:#000;">0</span>
<span class="t" style="left:610.90px;top:512px;letter-spacing:-0.922px;color:#000;word-spacing:1.0px;">0,0 %</span>
<span class="t" style="left:672.65px;top:512px;letter-spacing:-0.575px;color:#000;">29.11.2021</span>
<span class="t" style="left:105.40px;top:532px;letter-spacing:-1.006px;color:#000;word-spacing:1.0px;">4,0 KB</span>
<span class="t" style="left:147.15px;top:532px;letter-spacing:-0.061px;color:#000;">license.txt</span>
<span class="t" style="left:350.15px;top:532px;letter-spacing:-1.006px;color:#000;word-spacing:1.0px;">2,1 KB</span>
<span class="t" style="left:435.90px;top:532px;letter-spacing:-1.006px;color:#000;word-spacing:1.0px;">4,0 KB</span>
<span class="t" style="left:516.65px;top:532px;letter-spacing:0.000px;color:#000;">1</span>
<span class="t" style="left:571.90px;top:532px;letter-spacing:0.000px;color:#000;">0</span>
<span class="t" style="left:610.90px;top:532px;letter-spacing:-0.922px;color:#000;word-spacing:1.0px;">0,0 %</span>
<span class="t" style="left:672.65px;top:532px;letter-spacing:-0.575px;color:#000;">29.11.2021</span>
<span class="t" style="left:86.40px;top:552px;letter-spacing:-0.617px;color:#000;word-spacing:1.0px;">39,4 MB</span>
<span class="t" style="left:137.65px;top:552px;letter-spacing:-0.238px;color:#000;">p95v307b9.win32</span>
<span class="t" style="left:340.15px;top:552px;letter-spacing:-0.617px;color:#000;word-spacing:1.0px;">39,4 MB</span>
<span class="t" style="left:425.90px;top:552px;letter-spacing:-0.617px;color:#000;word-spacing:1.0px;">39,4 MB</span>
<span class="t" style="left:510.65px;top:552px;letter-spacing:-0.469px;color:#000;">11</span>
<span class="t" style="left:571.90px;top:552px;letter-spacing:0.000px;color:#000;">0</span>
<span class="t" style="left:610.90px;top:552px;letter-spacing:-0.922px;color:#000;word-spacing:1.0px;">1,5 %</span>
<span class="t" style="left:672.65px;top:552px;letter-spacing:-0.575px;color:#000;">29.11.2021</span>
<span class="t" style="left:95.40px;top:572px;letter-spacing:-0.617px;color:#000;word-spacing:1.0px;">33,1 MB</span>
<span class="t" style="left:147.15px;top:572px;letter-spacing:-0.205px;color:#000;">prime95.exe</span>
<span class="t" style="left:340.15px;top:572px;letter-spacing:-0.617px;color:#000;word-spacing:1.0px;">33,1 MB</span>
<span class="t" style="left:425.90px;top:572px;letter-spacing:-0.617px;color:#000;word-spacing:1.0px;">33,1 MB</span>
<span class="t" style="left:516.65px;top:572px;letter-spacing:0.000px;color:#000;">1</span>
<span class="t" style="left:571.90px;top:572px;letter-spacing:0.000px;color:#000;">0</span>
<span class="t" style="left:607.90px;top:572px;letter-spacing:-0.872px;color:#000;word-spacing:1.0px;">84,0 %</span>
<span class="t" style="left:672.65px;top:572px;letter-spacing:-0.575px;color:#000;">29.11.2021</span>
<span class="t" style="left:101.40px;top:592px;letter-spacing:-0.603px;color:#000;word-spacing:1.0px;">2,3 MB</span>
<span class="t" style="left:147.15px;top:592px;letter-spacing:0.060px;color:#000;">libcrypto-1_1.dll</span>
<span class="t" style="left:346.15px;top:592px;letter-spacing:-0.603px;color:#000;word-spacing:1.0px;">2,3 MB</span>
<span class="t" style="left:431.90px;top:592px;letter-spacing:-0.603px;color:#000;word-spacing:1.0px;">2,3 MB</span>
<span class="t" style="left:516.65px;top:592px;letter-spacing:0.000px;color:#000;">1</span>
<span class="t" style="left:571.90px;top:592px;letter-spacing:0.000px;color:#000;">0</span>
<span class="t" style="left:610.90px;top:592px;letter-spacing:-0.922px;color:#000;word-spacing:1.0px;">5,8 %</span>
<span class="t" style="left:672.65px;top:592px;letter-spacing:-0.575px;color:#000;">29.11.2021</span>
<span class="t" style="left:101.40px;top:612px;letter-spacing:-0.603px;color:#000;word-spacing:1.0px;">1,5 MB</span>
<span class="t" style="left:147.15px;top:612px;letter-spacing:0.170px;color:#000;">libhwloc-15.dll</span>
<span class="t" style="left:346.15px;top:612px;letter-spacing:-0.603px;color:#000;word-spacing:1.0px;">1,5 MB</span>
<span class="t" style="left:431.90px;top:612px;letter-spacing:-0.603px;color:#000;word-spacing:1.0px;">1,5 MB</span>
<span class="t" style="left:516.65px;top:612px;letter-spacing:0.000px;color:#000;">1</span>
<span class="t" style="left:571.90px;top:612px;letter-spacing:0.000px;color:#000;">0</span>
<span class="t" style="left:610.90px;top:612px;letter-spacing:-0.922px;color:#000;word-spacing:1.0px;">3,9 %</span>
<span class="t" style="left:672.65px;top:612px;letter-spacing:-0.575px;color:#000;">29.11.2021</span>
<span class="t" style="left:93.40px;top:632px;letter-spacing:-0.911px;color:#000;word-spacing:1.0px;">980,0 KB</span>
<span class="t" style="left:147.15px;top:632px;letter-spacing:0.206px;color:#000;">libcurl.dll</span>
<span class="t" style="left:338.15px;top:632px;letter-spacing:-0.911px;color:#000;word-spacing:1.0px;">977,6 KB</span>
<span class="t" style="left:423.90px;top:632px;letter-spacing:-0.911px;color:#000;word-spacing:1.0px;">980,0 KB</span>
<span class="t" style="left:516.65px;top:632px;letter-spacing:0.000px;color:#000;">1</span>
<span class="t" style="left:571.90px;top:632px;letter-spacing:0.000px;color:#000;">0</span>
<span class="t" style="left:610.90px;top:632px;letter-spacing:-0.922px;color:#000;word-spacing:1.0px;">2,4 %</span>
<span class="t" style="left:672.65px;top:632px;letter-spacing:-0.575px;color:#000;">29.11.2021</span>
<div class="abs" style="left:0;top:0;width:9px;height:9px;z-index:49;background:radial-gradient(circle at 9px 9px,rgba(60,64,76,0) 8px,#3c404c 8.8px)"></div><div class="abs" style="left:0;top:658px;width:9px;height:9px;z-index:49;background:radial-gradient(circle at 9px 0px,rgba(140,143,150,0) 8px,#8c8f96 8.8px)"></div><div id="frame"></div><div class="abs" style="left:798px;top:16px;width:1px;height:644px;background:#ababab;z-index:50"></div><div id="frameL"></div><div id="frameT"></div>
</div>
</body></html>
